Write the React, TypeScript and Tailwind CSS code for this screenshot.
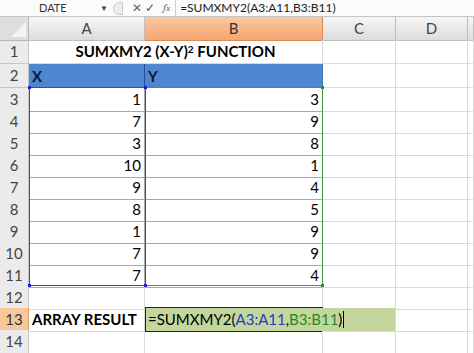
import React from "react";

const FONT = { fontFamily: "Lato, 'Liberation Sans', sans-serif" };

const COLS = ["A", "B", "C", "D", ""];
const DATA: [number, number][] = [
  [1, 3],
  [7, 9],
  [3, 8],
  [10, 1],
  [9, 4],
  [8, 5],
  [1, 9],
  [7, 9],
  [7, 4],
];

const grid = "grid grid-cols-[29px_116px_178px_73px_72px_1fr]";

function RowHead({ n, active = false }: { n: number; active?: boolean }) {
  return (
    <div
      className={`flex items-center justify-center border-r border-b text-[15px] ${
        active
          ? "bg-[#f8c79c] border-[#e0a06a] text-[#333]"
          : "bg-[#ebebeb] border-[#c6c6c6] text-[#444]"
      }`}
    >
      {n}
    </div>
  );
}

function Blank({ dark = false }: { dark?: boolean }) {
  return <div className={`border-r border-b ${dark ? "border-[#a8a8a8]" : "border-[#dadada]"}`} />;
}

export default function App() {
  return (
    <div className="w-[474px] h-[353px] overflow-hidden bg-white relative" style={FONT}>
      {/* formula bar */}
      <div className="h-[17px] flex items-center border-b border-[#c4c4c4] bg-[#fbfbfb] text-[12px] text-[#222]">
        <div className="w-[100px] pl-[39px] text-[11px] text-[#333]">DATE</div>
        <span className="text-[8px] text-[#444] w-[10px]">▼</span>
        <span className="ml-[3px] w-[10px] h-[13px] rounded-l-full border border-[#c8c8c8] bg-[#eee]" />
        <span className="ml-[9px] text-[#666] text-[12px]">✕</span>
        <span className="ml-[3px] text-[#555] text-[12px]">✓</span>
        <span className="ml-[8px] italic text-[#777] text-[11px] font-serif">f<span className="text-[9px]">x</span></span>
        <span className="ml-[5px] h-full border-l border-[#d0d0d0]" />
        <span className="ml-[4px] text-[12px]">=SUMXMY2(A3:A11,B3:B11)</span>
      </div>

      {/* column headers */}
      <div className={`${grid} h-[23px]`}>
        <div className="relative bg-[#dedede] border-r border-b border-[#b8b8b8]">
          <svg className="absolute inset-0" width="29" height="23" viewBox="0 0 29 23">
            <polygon points="11,20 26,5 26,20" fill="#f4f4f4" />
          </svg>
        </div>
        {COLS.map((c, i) => (
          <div
            key={i}
            className={`flex items-center justify-center text-[15px] border-r border-b ${
              c === "B"
                ? "bg-gradient-to-b from-[#fbc8a0] to-[#f5a572] border-[#d98c5a] text-[#333]"
                : "bg-gradient-to-b from-[#f6f6f6] to-[#dcdcdc] border-[#c0c0c0] text-[#444]"
            }`}
          >
            {c}
          </div>
        ))}
      </div>

      {/* row 1 */}
      <div className={`${grid} h-[24px]`}>
        <RowHead n={1} />
        <div className="col-span-2 flex items-center justify-center border-r border-b border-[#dadada] font-bold text-[15px] text-black">
          SUMXMY2 (X-Y)<sup className="text-[10px] relative -top-[3px]">2</sup>&nbsp;FUNCTION
        </div>
        <Blank />
        <Blank />
        <Blank />
      </div>

      {/* row 2 */}
      <div className={`${grid} h-[24px]`}>
        <RowHead n={2} />
        <div className="bg-[#4f86d2] border-r border-[#2a4a9a] flex items-center pl-[3px] font-bold text-[15px] text-[#10182e]">X</div>
        <div className="bg-[#4f86d2] border-r border-[#3f70b8] flex items-center pl-[3px] font-bold text-[15px] text-[#10182e]">Y</div>
        <Blank />
        <Blank />
        <Blank />
      </div>

      {/* data rows */}
      {DATA.map(([x, y], i) => (
        <div key={i} className={`${grid} h-[22px]`}>
          <RowHead n={i + 3} />
          <div className="flex items-center justify-end pr-[3px] border-r border-b border-[#a8a8a8] text-[15px] text-black">{x}</div>
          <div className="flex items-center justify-end pr-[3px] border-r border-b border-[#a8a8a8] text-[15px] text-black">{y}</div>
          <Blank />
          <Blank />
          <Blank />
        </div>
      ))}

      {/* row 12 */}
      <div className={`${grid} h-[22px]`}>
        <RowHead n={12} />
        <Blank />
        <Blank />
        <Blank />
        <Blank />
        <Blank />
      </div>

      {/* row 13 */}
      <div className={`${grid} h-[22px]`}>
        <RowHead n={13} active />
        <div className="flex items-center pl-[3px] border-r border-b border-[#dadada] font-bold text-[15px] text-black whitespace-nowrap">
          ARRAY RESULT
        </div>
        <div className="bg-[#c3d69b] border border-[#222] -mt-px flex items-center pl-[2px] text-[15px] text-black whitespace-nowrap overflow-visible">
          <span className="relative z-10 flex items-center bg-[#c3d69b]">
            =SUMXMY2(<span className="text-[#1f3fbf]">A3:A11</span>,<span className="text-[#1f8a2a]">B3:B11</span>)
            <span className="ml-[1px] inline-block w-px h-[17px] bg-black" />
          </span>
        </div>
        <div className="bg-[#c3d69b] border-r border-b border-[#dadada]" />
        <Blank />
        <Blank />
      </div>

      {/* row 14 */}
      <div className={`${grid} h-[22px]`}>
        <RowHead n={14} />
        <Blank />
        <Blank />
        <Blank />
        <Blank />
        <Blank />
      </div>

      {/* range highlights */}
      <div className="absolute left-[145px] top-[87px] w-[178px] h-[199px] border border-[#3f9a3f] pointer-events-none" />
      <div className="absolute left-[29px] top-[87px] w-[117px] h-[199px] border border-[#3b3bf0] pointer-events-none" />
      <div className="absolute left-[28px] top-[86px] w-[3px] h-[3px] bg-[#2020c0]" />
      <div className="absolute left-[144px] top-[86px] w-[3px] h-[3px] bg-[#2020c0]" />
      <div className="absolute left-[28px] top-[284px] w-[3px] h-[3px] bg-[#2020c0]" />
      <div className="absolute left-[144px] top-[284px] w-[3px] h-[3px] bg-[#2020c0]" />
      <div className="absolute left-[321px] top-[86px] w-[3px] h-[3px] bg-[#2a8a2a]" />
      <div className="absolute left-[321px] top-[284px] w-[3px] h-[3px] bg-[#2a8a2a]" />
    </div>
  );
}
